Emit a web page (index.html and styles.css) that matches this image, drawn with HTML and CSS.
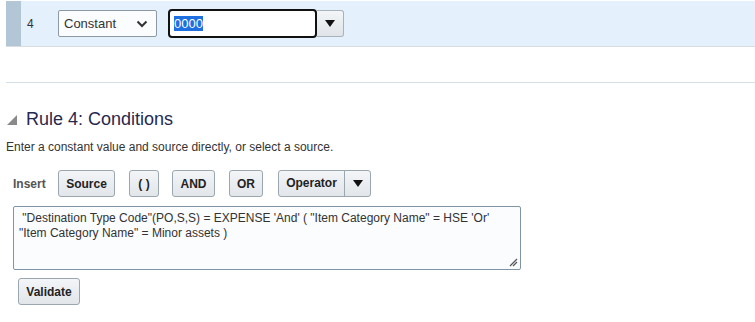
FILE: index.html
```html
<!DOCTYPE html>
<html>
<head>
<meta charset="utf-8">
<link rel="stylesheet" href="styles.css">
</head>
<body>
<div class="row">
  <div class="row-handle"></div>
  <div class="row-num">4</div>
  <div class="select">
    <span>Constant</span>
    <svg class="chev" width="12" height="8" viewBox="0 0 12 8"><path d="M1.5 1.5 L6 6 L10.5 1.5" fill="none" stroke="#333" stroke-width="2"/></svg>
  </div>
  <div class="combo">
    <div class="input"><span class="sel">0000</span></div>
    <div class="drop"><svg width="10" height="7" viewBox="0 0 10 7"><path d="M0 0 H10 L5 7 Z" fill="#111"/></svg></div>
  </div>
</div>
<div class="divider"></div>
<div class="section">
  <h2 class="title"><svg class="tri" width="10" height="10" viewBox="0 0 10 10"><path d="M10 0 V10 H0 Z" fill="#8a8a8a"/></svg>Rule 4: Conditions</h2>
  <p class="desc">Enter a constant value and source directly, or select a source.</p>
  <div class="toolbar">
    <span class="label">Insert</span>
    <button class="btn b-source">Source</button>
    <button class="btn b-paren">( )</button>
    <button class="btn b-and">AND</button>
    <button class="btn b-or">OR</button>
    <div class="btn split"><span class="split-main">Operator</span><span class="split-arrow"><svg width="10" height="7" viewBox="0 0 10 7"><path d="M0 0 H10 L5 7 Z" fill="#111"/></svg></span></div>
  </div>
  <div class="textarea">
    <div class="ta-text">&nbsp;"Destination Type Code"(PO,S,S) = EXPENSE 'And' ( "Item Category Name" = HSE 'Or'<br>"Item Category Name" = Minor assets )</div>
    <svg class="grip" width="10" height="10" viewBox="0 0 10 10"><path d="M9 2 L2 9 M9 5 L5 9" stroke="#555" stroke-width="1.2"/></svg>
  </div>
  <button class="btn validate">Validate</button>
</div>
</body>
</html>
```
FILE: styles.css
```css
* { box-sizing: border-box; }
body {
  margin: 0;
  background: #fff;
  font-family: "Liberation Sans", Arial, sans-serif;
  font-size: 12px;
  color: #333;
  width: 755px;
  height: 322px;
  overflow: hidden;
}
.row {
  margin: 1px 0 0 6px;
  height: 46px;
  background: #e4f0fc;
  border-bottom: 1px solid #d9dde1;
  display: flex;
  align-items: center;
}
.row-handle {
  width: 15px;
  align-self: stretch;
  background: #b3c6d5;
}
.row-num {
  width: 37px;
  padding-left: 6px;
  font-size: 12px;
  color: #333;
}
.select {
  width: 99px;
  height: 27px;
  border: 1px solid #8d9aa5;
  border-radius: 2px;
  background: #fbfcfe;
  display: flex;
  align-items: center;
  justify-content: space-between;
  padding: 0 8px 0 5px;
  font-size: 13px;
  color: #333;
}
.combo {
  display: flex;
  align-items: center;
  margin-left: 11px;
}
.input {
  width: 149px;
  height: 29px;
  border: 2px solid #111;
  border-radius: 4px;
  background: #fff;
  display: flex;
  align-items: center;
  padding-left: 4px;
  font-size: 13px;
}
.sel {
  background: #1e6fe0;
  color: #fff;
  line-height: 15px;
}
.drop {
  width: 27px;
  height: 27px;
  border: 1px solid #a8b2ba;
  border-left: none;
  border-radius: 0 3px 3px 0;
  background: linear-gradient(#f3f5f7, #e0e4e8);
  display: flex;
  align-items: center;
  justify-content: center;
}
.divider {
  margin: 35px 0 0 6px;
  height: 1px;
  background: #d6dfe6;
}
.section {
  padding: 0 0 0 7px;
}
.title {
  margin: 24px 0 0 0;
  font-size: 18px;
  font-weight: normal;
  color: #26294f;
  display: flex;
  align-items: center;
  height: 24px;
}
.tri {
  margin-right: 9px;
  margin-top: 2px;
}
.desc {
  margin: 9px 0 0 -1px;
  font-size: 12px;
  color: #333;
}
.toolbar {
  margin: 16px 0 0 6px;
  display: flex;
  align-items: center;
  height: 27px;
}
.label {
  font-weight: bold;
  color: #555;
  font-size: 12px;
  width: 45px;
}
.btn {
  height: 27px;
  border: 1px solid #9aa6b0;
  border-radius: 3px;
  background: linear-gradient(#f3f5f7, #e2e6ea);
  font-family: "Liberation Sans", Arial, sans-serif;
  font-size: 12px;
  font-weight: bold;
  color: #222;
  padding: 0;
  display: flex;
  align-items: center;
  justify-content: center;
}
.b-source { width: 57px; }
.b-paren { width: 30px; margin-left: 14px; }
.b-and { width: 43px; margin-left: 13px; }
.b-or { width: 34px; margin-left: 14px; }
.split { width: 93px; margin-left: 15px; justify-content: flex-start; }
.split-main {
  width: 66px;
  text-align: center;
  border-right: 1px solid #9aa6b0;
  line-height: 25px;
}
.split-arrow {
  flex: 1;
  display: flex;
  justify-content: center;
}
.textarea {
  position: relative;
  margin: 9px 0 0 6px;
  width: 508px;
  height: 64px;
  border: 1px solid #7f95a5;
  border-radius: 2px;
  background: #fbfcfe;
  padding: 4px 5px;
  font-size: 12px;
  line-height: 15px;
  color: #333;
}
.grip {
  position: absolute;
  right: 2px;
  bottom: 2px;
}
.validate {
  margin: 8px 0 0 11px;
  width: 62px;
}
```
